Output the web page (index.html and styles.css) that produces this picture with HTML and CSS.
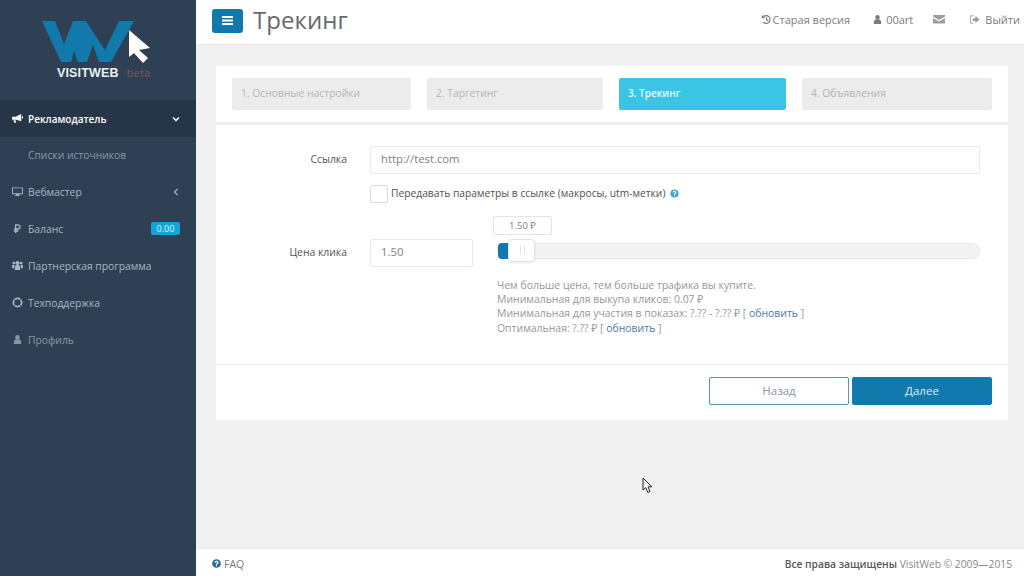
FILE: index.html
```html
<!DOCTYPE html>
<html lang="ru">
<head>
<meta charset="utf-8">
<title>Трекинг</title>
<link rel="stylesheet" href="styles.css">
</head>
<body>
<div class="app">
  <aside class="sidebar">
    <div class="logo">
      <svg class="logo-mark" width="112" height="62" viewBox="0 0 112 62">
        <path fill="#1279ad" d="M1 1H14L23 24L32 1H45L54 15L64 30L78 1H93L70 42H58L52 25L46 42H37L33 31L30 42H20Z"/>
        <path fill="#fff" d="M88 10L109 28L98 30L107 38L102 43L93 33L88 37Z"/>
      </svg>
      <div class="logo-text"><span class="brand">VISITWEB</span><span class="beta">beta</span></div>
    </div>
    <nav class="menu">
      <a class="item active">
        <svg class="ic" viewBox="0 0 12 12"><path fill="currentColor" d="M0 4H4L10 1V9L4 7H3.500L4.500 10.500H2.500L1.500 7H0ZM10.800 3.500H12V6H10.800Z"/></svg>
        <span class="lbl">Рекламодатель</span>
        <svg class="chev" viewBox="0 0 8 8"><path fill="none" stroke="currentColor" stroke-width="1.500" d="M1 2.500L4 5.500L7 2.500"/></svg>
      </a>
      <a class="item sub"><span class="lbl">Списки источников</span></a>
      <a class="item">
        <svg class="ic" viewBox="0 0 12 12"><path fill="currentColor" d="M0 1.500H12V9H7.500V10H9V11H3V10H4.500V9H0ZM1 2.500V8H11V2.500Z"/></svg>
        <span class="lbl">Вебмастер</span>
        <svg class="chev" viewBox="0 0 8 8"><path fill="none" stroke="currentColor" stroke-width="1.200" d="M5.500 1L2.500 4L5.500 7"/></svg>
      </a>
      <a class="item">
        <svg class="ic" viewBox="0 0 12 12"><path fill="none" stroke="currentColor" stroke-width="1.500" d="M4 11V2H7A2.300 2.300 0 0 1 7 6.500H2M2 8.700H7"/></svg>
        <span class="lbl">Баланс</span>
        <span class="badge">0.00</span>
      </a>
      <a class="item">
        <svg class="ic" viewBox="0 0 12 12"><path fill="currentColor" d="M4.200 5.500H7.800L9 7V11H3V7ZM6 1A2.200 2.200 0 1 1 6 5.400A2.200 2.200 0 1 1 6 1ZM2 1.800A1.600 1.600 0 1 1 2 5A1.600 1.600 0 1 1 2 1.800ZM10 1.800A1.600 1.600 0 1 1 10 5A1.600 1.600 0 1 1 10 1.800ZM0 5.500H3L2.200 7V9H0ZM9 5.500H12V9H9.800V7Z"/></svg>
        <span class="lbl">Партнерская программа</span>
      </a>
      <a class="item">
        <svg class="ic" viewBox="0 0 12 12"><circle cx="6" cy="6" r="4.500" fill="none" stroke="currentColor" stroke-width="2"/><circle cx="6" cy="6" r="2" fill="#2f4054"/><path fill="none" stroke="#2f4054" stroke-width="1" d="M2.500 2.500L4.500 4.500M9.500 2.500L7.500 4.500M2.500 9.500L4.500 7.500M9.500 9.500L7.500 7.500"/></svg>
        <span class="lbl">Техподдержка</span>
      </a>
      <a class="item dim">
        <svg class="ic" viewBox="0 0 12 12"><path fill="currentColor" d="M6 1A2.500 2.500 0 1 1 6 6A2.500 2.500 0 1 1 6 1ZM3.500 6H8.500L10 8V11H2V8Z"/></svg>
        <span class="lbl">Профиль</span>
      </a>
    </nav>
  </aside>

  <div class="main">
    <header class="topbar">
      <div class="top-left">
        <button class="burger" type="button" aria-label="Меню">
          <svg width="11" height="9" viewBox="0 0 11 9"><path fill="#fff" d="M0 0H11V2H0ZM0 3.500H11V5.500H0ZM0 7H11V9H0Z"/></svg>
        </button>
        <h1>Трекинг</h1>
      </div>
      <div class="top-links">
        <a class="tl tl-old">
          <svg class="tic" viewBox="0 0 12 12"><path fill="none" stroke="currentColor" stroke-width="1.300" d="M2.500 3A4.300 4.300 0 1 1 2.500 9M1.500 1.500V4H4M6 3.500V6.300L8 7.300"/></svg>
          <span>Старая версия</span>
        </a>
        <a class="tl tl-user">
          <svg class="tic" viewBox="0 0 12 12"><path fill="currentColor" d="M6 1A2.500 2.500 0 1 1 6 6A2.500 2.500 0 1 1 6 1ZM3.500 6H8.500L10 8V11H2V8Z"/></svg>
          <span>00art</span>
        </a>
        <a class="tl tl-mail">
          <svg class="tic" viewBox="0 0 12 12"><path fill="currentColor" d="M0 2H12V3.500L6 7L0 3.500ZM0 5L6 8.500L12 5V10.500H0Z"/></svg>
        </a>
        <a class="tl tl-exit">
          <svg class="tic" viewBox="0 0 12 12"><path fill="none" stroke="currentColor" stroke-width="1" d="M5 2H1.500V10H5"/><path fill="currentColor" d="M4 4.500H7V2L11.500 6L7 10V7.500H4Z"/></svg>
          <span>Выйти</span>
        </a>
      </div>
    </header>

    <main class="content">
      <section class="panel">
        <ol class="steps">
          <li class="step s1">1. Основные настройки</li>
          <li class="step s2">2. Таргетинг</li>
          <li class="step s3 current">3. Трекинг</li>
          <li class="step s4">4. Объявления</li>
        </ol>
        <div class="form">
          <div class="row row-url">
            <label class="label">Ссылка</label>
            <div class="field url">http://test.com</div>
          </div>
          <div class="check-row">
            <span class="checkbox"></span>
            <span class="check-text">Передавать параметры в ссылке (макросы, utm-метки)</span>
            <svg class="help" viewBox="0 0 10 10"><circle cx="5" cy="5" r="4.500" fill="#3aa6d0"/><path fill="none" stroke="#fff" stroke-width="1.200" d="M3.500 4A1.500 1.400 0 1 1 5.500 5.300Q5 5.500 5 6.300"/><path fill="#fff" d="M4.400 7H5.600V8.200H4.400Z"/></svg>
          </div>
          <div class="row row-price">
            <label class="label">Цена клика</label>
            <div class="field price">1.50</div>
            <div class="slider-col">
              <div class="tip">1.50 ₽</div>
              <div class="track"><span class="fill"></span><span class="handle"></span></div>
              <div class="hints">
                <p>Чем больше цена, тем больше трафика вы купите.</p>
                <p>Минимальная для выкупа кликов: 0.07 ₽</p>
                <p>Минимальная для участия в показах: ?.?? - ?.?? ₽ [ <a class="refresh">обновить</a> ]</p>
                <p>Оптимальная: ?.?? ₽ [ <a class="refresh">обновить</a> ]</p>
              </div>
            </div>
          </div>
        </div>
        <div class="actions">
          <button class="btn back" type="button">Назад</button>
          <button class="btn next" type="button">Далее</button>
        </div>
      </section>
    </main>

    <footer class="footer">
      <a class="faq">
        <svg class="faq-ic" viewBox="0 0 10 10"><circle cx="5" cy="5" r="4.800" fill="#2a6a94"/><path fill="none" stroke="#fff" stroke-width="1.300" d="M3.400 4A1.600 1.400 0 1 1 5.500 5.300Q5 5.500 5 6.300"/><path fill="#fff" d="M4.300 7H5.700V8.300H4.300Z"/></svg>
        <span>FAQ</span>
      </a>
      <div class="copy"><b>Все права защищены</b> VisitWeb © 2009—2015</div>
    </footer>
  </div>

  <svg class="cursor" width="12" height="17" viewBox="0 0 12 17"><path fill="#fff" stroke="#222" stroke-width="1" d="M1 1V13L3.800 10.600L5.800 15.500L8 14.500L6 9.800H9.800Z"/></svg>
</div>
</body>
</html>
```

FILE: styles.css
```css
* { box-sizing: border-box; }
html, body { margin: 0; height: 100%; }
body {
  font-family: "Open Sans", "Noto Sans", sans-serif;
  font-size: 11px;
  color: #676a6c;
  overflow: hidden;
}
p, h1, ol { margin: 0; padding: 0; }
.app { position: relative; display: flex; width: 1024px; height: 576px; }

.sidebar { width: 196px; flex: none; background: #2f4054; color: #a7b1c2; }
.logo { height: 100px; padding: 20px 0 0 41px; position: relative; }
.logo-mark { display: block; }
.logo-text { position: absolute; left: 57px; top: 65px; display: flex; align-items: baseline; gap: 8px; }
.brand { font-family: "Liberation Sans", sans-serif; font-weight: 700; font-size: 12.500px; line-height: 16px; color: #e8edf2; letter-spacing: .15px; }
.beta { font-size: 10.500px; color: #85545c; letter-spacing: .5px; }

.menu { display: flex; flex-direction: column; }
.item { height: 37px; display: flex; align-items: center; padding: 0 16px 2px 12px; color: #aab4c0; font-size: 10.300px; font-weight: 500; }
.item .ic { width: 11px; height: 11px; flex: none; margin-right: 5px; }
.item .lbl { flex: 1; white-space: nowrap; }
.item.active { background: #273646; color: #fff; font-weight: 600; font-size: 10px; padding-bottom: 0; }
.item.sub { padding-left: 28px; color: #8a96a5; }
.item.dim { color: #8a96a5; }
.chev { width: 8px; height: 8px; flex: none; margin-right: 0; }
.badge { background: #13a5d6; color: #dff4fb; border-radius: 2px; font-size: 9px; line-height: 13px; width: 29px; text-align: center; }

.main { flex: 1; min-width: 0; display: flex; flex-direction: column; background: #f1f1f1; }
.topbar { height: 45px; flex: none; background: #fff; border-bottom: 1px solid #ececec; display: flex; justify-content: space-between; padding: 0 4px 0 16px; }
.top-left { display: flex; align-items: center; gap: 10px; padding-bottom: 3px; }
.burger { width: 31px; height: 24px; border: 0; border-radius: 3px; background: #1279ad; display: flex; align-items: center; justify-content: center; padding: 0; }
h1 { font-size: 24px; font-weight: 400; color: #676a6c; line-height: 30px; padding-bottom: 2px; letter-spacing: .05px; }
.top-links { display: flex; align-items: center; padding-bottom: 6px; font-size: 11px; color: #7b7e80; }
.tl { display: flex; align-items: center; }
.tic { width: 11px; height: 11px; flex: none; }
.tl-old { gap: 1px; margin-right: 22px; }
.tl-user { gap: 3px; margin-right: 20px; }
.tl-mail { margin-right: 24px; color: #9b9ea0; }
.tl-mail .tic { width: 12px; height: 12px; }
.tl-exit { gap: 5px; }
.tl-exit .tic { color: #9b9ea0; }

.content { flex: 1; padding: 21px 16px 0 20px; }
.panel { background: #fff; width: 792px; height: 354px; display: flex; flex-direction: column; }
.steps { list-style: none; display: grid; grid-template-columns: 179px 176px 167px 190px; column-gap: 16px; padding: 12px 16px; border-bottom: 3px solid #efefef; height: 59px; }
.step { height: 32px; background: #ececec; color: #b5b5b5; border-radius: 2px; line-height: 31px; padding-left: 9px; font-size: 10.350px; }
.step.current { background: #3cc4e4; color: #eafaff; font-weight: 600; font-size: 10px; }

.form { flex: 1; padding-top: 21px; border-bottom: 1px solid #ececec; }
.row { display: flex; }
.label { width: 131px; text-align: right; font-weight: 500; font-size: 10.400px; color: #505355; flex: none; margin-right: 23px; }
.row-url { align-items: center; }
.row-url .label { padding-bottom: 3px; }
.field { height: 28px; border: 1px solid #e9e9e9; border-radius: 2px; color: #7c7f81; font-size: 11.300px; line-height: 23px; padding-left: 10px; }
.url { width: 610px; }
.check-row { display: flex; align-items: center; margin: 11px 0 0 154px; height: 18px; }
.checkbox { width: 18px; height: 18px; border: 1px solid #d9d9d9; border-radius: 2px; margin-right: 3px; flex: none; }
.check-text { font-weight: 500; color: #4f5254; font-size: 10.250px; padding-bottom: 2px; }
.help { width: 9px; height: 9px; margin: 0 0 2px 5px; }
.row-price { margin-top: 13px; }
.row-price .label { padding-top: 29px; }
.price { width: 103px; margin-top: 23px; flex: none; line-height: 24px; }
.slider-col { width: 483px; margin-left: 24px; position: relative; }
.tip { width: 59px; height: 19px; margin-left: -4px; border: 1px solid #e4e4e4; border-radius: 2px; text-align: center; font-size: 9.500px; line-height: 17px; color: #7c7f81; }
.track { height: 16px; margin-top: 8px; background: #f3f3f3; border: 1px solid #e6e6e6; border-radius: 8px; position: relative; }
.fill { position: absolute; left: 0; top: -1px; width: 13px; height: 16px; background: #1279ad; border-radius: 4px 0 0 4px; }
.handle { position: absolute; left: 10px; top: -5px; width: 27px; height: 23px; background: #fff; border: 1px solid #e2e2e2; border-radius: 4px; box-shadow: 0 1px 2px rgba(0,0,0,.1); }
.handle::after { content: ""; position: absolute; left: 11px; top: 6px; width: 3px; height: 9px; border: solid #e4e4e4; border-width: 0 1px; }
.hints { margin-top: 18px; font-size: 10.450px; line-height: 14.400px; color: #95989a; padding-top: .5px; }
.refresh { color: #4f78a6; }

.actions { display: flex; justify-content: flex-end; gap: 3px; padding: 12px 16px 0 0; height: 55px; }
.btn { width: 140px; height: 28px; border-radius: 2px; font: inherit; font-size: 11.500px; padding: 0 0 2px; }
.back { background: #fff; border: 1px solid #5b92ad; color: #8a93a8; }
.next { background: #1279ad; border: 1px solid #1279ad; color: #d9edf6; font-weight: 500; }

.footer { height: 28px; flex: none; background: #fff; border-top: 1px solid #ececec; display: flex; justify-content: space-between; align-items: center; padding: 2px 12px 0 16px; font-size: 10.250px; }
.faq { display: flex; align-items: center; gap: 3px; color: #76797b; font-size: 10.500px; }
.faq-ic { width: 9px; height: 9px; }
.copy { color: #85888a; }
.copy b { font-weight: 600; color: #55585a; }

.cursor { position: absolute; left: 642px; top: 477px; }
```
